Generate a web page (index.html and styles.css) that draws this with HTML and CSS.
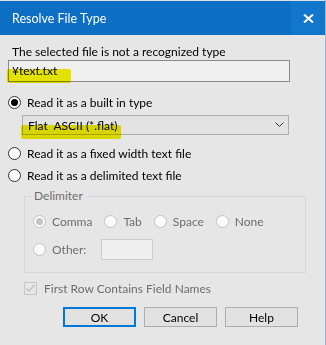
FILE: index.html
```html
<!DOCTYPE html>
<html lang="en">
<head>
    <meta charset="UTF-8">
    <title>Resolve File Type</title>
    <link rel="stylesheet" href="styles.css">
</head>
<body>
    <div class="dialog">
        <div class="titlebar">
            <span class="title">Resolve File Type</span>
            <span class="close">
                <svg width="11" height="9" viewBox="0 0 11 9"><path d="M1 0.5 L10 8.5 M10 0.5 L1 8.5" stroke="#fff" stroke-width="2"/></svg>
            </span>
        </div>
        <div class="content">
            <div class="prompt">The selected file is not a recognized type</div>
            <div class="filename"><span class="mark mark-file">¥text.txt</span></div>

            <div class="option first"><span class="radio checked"></span>Read it as a built in type</div>
            <div class="select">
                <span class="mark mark-type">Flat&nbsp; ASCII (*.flat)</span>
                <svg class="chevron" width="9" height="5" viewBox="0 0 9 5"><path d="M0.5 0.5 L4.5 4.5 L8.5 0.5" fill="none" stroke="#333" stroke-width="1"/></svg>
            </div>
            <div class="option"><span class="radio"></span>Read it as a fixed width text file</div>
            <div class="option"><span class="radio"></span>Read it as a delimited text file</div>

            <div class="group">
                <span class="legend">Delimiter</span>
                <div class="group-row">
                    <span class="choice"><span class="radio off checked"></span>Comma</span>
                    <span class="choice"><span class="radio off"></span>Tab</span>
                    <span class="choice"><span class="radio off"></span>Space</span>
                    <span class="choice"><span class="radio off"></span>None</span>
                </div>
                <div class="group-row">
                    <span class="choice"><span class="radio off"></span>Other:</span>
                    <span class="other-box"></span>
                </div>
            </div>

            <div class="check-row">
                <span class="checkbox">
                    <svg width="11" height="11" viewBox="0 0 11 11"><path d="M1.5 5.5 L4 8 L9.5 2" fill="none" stroke="#bdbdbd" stroke-width="1.2"/></svg>
                </span>
                First Row Contains Field Names
            </div>

            <div class="buttons">
                <button class="btn default">OK</button>
                <button class="btn">Cancel</button>
                <button class="btn">Help</button>
            </div>
        </div>
    </div>
</body>
</html>
```

FILE: styles.css
```css
body {
    margin: 0;
    background-color: #e6e6e6;
    font-family: Lato, "Liberation Sans", sans-serif;
    font-size: 12px;
    color: #000;
}
.dialog {
    width: 325px;
    height: 345px;
    border-right: 1px solid #9db6dc;
    background-color: #e6e6e6;
}
.titlebar {
    height: 34px;
    border-top: 1px solid #dde2e8;
    background-color: #0c6fc4;
    display: flex;
    justify-content: space-between;
    align-items: stretch;
    color: #fff;
}
.title {
    padding-left: 12px;
    align-self: center;
    font-size: 12.5px;
}
.close {
    width: 34px;
    background-color: #1176cc;
    display: flex;
    justify-content: center;
    align-items: center;
}
.content {
    padding-left: 8px;
}
.prompt {
    height: 15px;
    line-height: 15px;
    margin-top: 9px;
    padding-left: 4px;
}
.filename {
    width: 277px;
    height: 20px;
    margin-top: 1px;
    border: 1px solid #8a8a8a;
    background-color: #f0f0f0;
    line-height: 20px;
    padding-left: 3px;
}
.mark {
    position: relative;
}
.mark::after {
    content: "";
    position: absolute;
    background-color: #f2ef00;
    mix-blend-mode: multiply;
    border-radius: 2px;
}
.mark-file::after {
    left: -5px;
    right: -14px;
    top: 6px;
    bottom: -5px;
}
.mark-type::after {
    left: -7px;
    right: -3px;
    top: 7px;
    bottom: -6px;
}
.option {
    display: flex;
    align-items: center;
    height: 22px;
}
.option.first {
    margin-top: 9px;
}
.radio {
    width: 11px;
    height: 11px;
    border: 1px solid #333;
    border-radius: 50%;
    background-color: #fff;
    margin-right: 6px;
    display: flex;
    justify-content: center;
    align-items: center;
}
.radio.checked::after {
    content: "";
    width: 7px;
    height: 7px;
    border-radius: 50%;
    background-color: #000;
}
.radio.off {
    border-color: #c2c2c2;
    background-color: #fcfcfc;
}
.radio.off.checked::after {
    background-color: #c4c4c4;
}
.select {
    width: 256px;
    height: 18px;
    margin: 2px 0 7px 14px;
    border: 1px solid #adadad;
    background-color: #e3e3e3;
    display: flex;
    justify-content: space-between;
    align-items: center;
    padding-left: 5px;
    padding-right: 4px;
}
.chevron {
    margin-bottom: 1px;
}
.group {
    position: relative;
    width: 282px;
    height: 77px;
    margin: 10px 0 0 16px;
    border: 1px solid #d7d7d7;
    color: #6d6d6d;
    padding: 10px 0 0 8px;
    box-sizing: border-box;
}
.legend {
    position: absolute;
    top: -9px;
    left: 6px;
    padding: 0 3px;
    background-color: #e6e6e6;
}
.group-row {
    display: flex;
    align-items: center;
    height: 28px;
}
.choice {
    display: flex;
    align-items: center;
    margin-right: 12px;
}
.other-box {
    width: 50px;
    height: 19px;
    border: 1px solid #cdcdcd;
    background-color: #efefef;
    margin-left: 3px;
}
.check-row {
    display: flex;
    align-items: center;
    height: 13px;
    margin: 9px 0 0 16px;
    color: #6d6d6d;
}
.checkbox {
    width: 11px;
    height: 11px;
    border: 1px solid #c6c6c6;
    margin-right: 7px;
    display: flex;
    justify-content: center;
    align-items: center;
}
.buttons {
    display: flex;
    gap: 8px;
    margin: 12px 0 0 55px;
}
.btn {
    width: 73px;
    height: 20px;
    border: 1px solid #adadad;
    background-color: #e1e1e1;
    font-family: Lato, "Liberation Sans", sans-serif;
    font-size: 12px;
    color: #000;
    padding: 0;
}
.btn.default {
    border: 2px solid #0078d7;
}
```
